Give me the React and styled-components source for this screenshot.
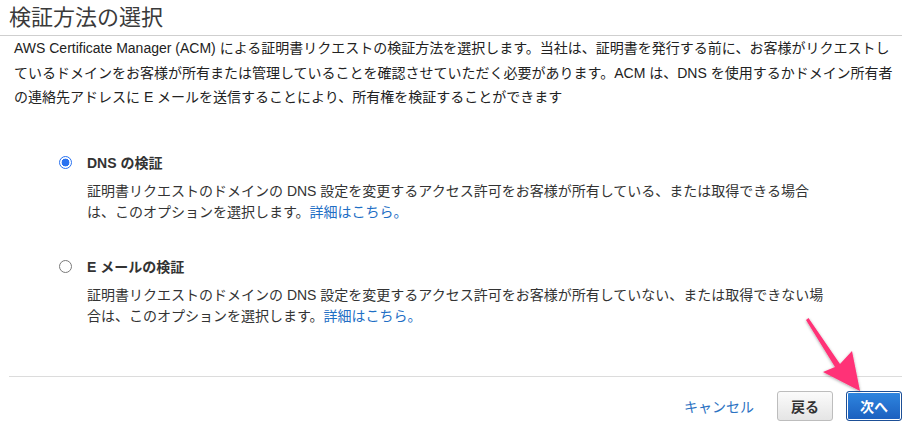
import React from "react";
import styled, { createGlobalStyle } from "styled-components";

const Global = createGlobalStyle`
  html, body { margin: 0; padding: 0; background: #fff; }
  body {
    font-family: "Liberation Sans", "Noto Sans CJK JP", sans-serif;
    color: #222;
    -webkit-font-smoothing: antialiased;
  }
`;

const Page = styled.div`
  position: relative;
  width: 914px;
  height: 432px;
  padding-right: 12px;
  box-sizing: border-box;
  overflow: hidden;
`;

const Header = styled.h1`
  margin: 0;
  height: 36px;
  box-sizing: border-box;
  padding: 5px 0 0 9px;
  font-size: 22px;
  line-height: 26px;
  font-weight: normal;
  color: #3a3a3a;
  border-bottom: 1px solid #cfcfcf;
`;

const Intro = styled.p`
  margin: 0;
  padding: 0 0 0 14px;
  font-size: 14px;
  line-height: 24.5px;
  color: #222;
  white-space: nowrap;
`;

const Options = styled.div`
  display: flex;
  flex-direction: column;
  gap: 33px;
  padding: 43px 0 0 59px;
`;

const Option = styled.label`
  display: grid;
  grid-template-columns: 13px 1fr;
  column-gap: 15px;
  row-gap: 8px;
  align-items: center;
`;

const Radio = styled.span`
  width: 13px;
  height: 13px;
  box-sizing: border-box;
  border-radius: 50%;
  border: 1px solid ${(p) => (p.$checked ? "#2a72f0" : "#7a7a7a")};
  background: ${(p) =>
    p.$checked ? "radial-gradient(circle, #2a72f0 0 3.6px, #fff 4.2px)" : "#fff"};
`;

const Label = styled.span`
  font-size: 14px;
  font-weight: bold;
  color: #333;
  line-height: 20px;
`;

const Desc = styled.p`
  grid-column: 2;
  margin: 0;
  font-size: 14px;
  line-height: 21.5px;
  color: #333;
  white-space: nowrap;
`;

const Link = styled.a`
  color: #1f6fc5;
  text-decoration: none;
`;

const Footer = styled.div`
  margin: 48px 0 0 9px;
  border-top: 1px solid #dcdcdc;
  display: flex;
  justify-content: flex-end;
  align-items: center;
  padding-top: 14px;
`;

const TextButton = styled.a`
  font-size: 14px;
  color: #2b72c2;
  margin-right: 23px;
`;

const Button = styled.button`
  height: 30px;
  box-sizing: border-box;
  padding: 0 13px;
  margin-left: ${(p) => (p.$primary ? "13px" : "0")};
  border-radius: 3px;
  font-family: "Liberation Sans", "Noto Sans CJK JP", sans-serif;
  font-size: 14px;
  font-weight: bold;
  color: ${(p) => (p.$primary ? "#fff" : "#333")};
  border: 1px solid ${(p) => (p.$primary ? "#1d4f96" : "#bdbdbd")};
  background: ${(p) =>
    p.$primary
      ? "linear-gradient(#2f86e0, #1b5fbe)"
      : "linear-gradient(#fbfbfb, #e5e5e5)"};
  box-shadow: ${(p) => (p.$primary ? "inset 0 0 0 1px #fff" : "none")};
`;

const Arrow = styled.svg`
  position: absolute;
  left: 790px;
  top: 309px;
  width: 90px;
  height: 95px;
  overflow: visible;
`;

export default function App() {
  return (
    <Page>
      <Global />
      <Header>検証方法の選択</Header>
      <Intro>
        AWS Certificate Manager (ACM) による証明書リクエストの検証方法を選択します。当社は、証明書を発行する前に、お客様がリクエストし
        <br />
        ているドメインをお客様が所有または管理していることを確認させていただく必要があります。ACM は、DNS を使用するかドメイン所有者
        <br />
        の連絡先アドレスに E メールを送信することにより、所有権を検証することができます
      </Intro>
      <Options>
        <Option>
          <Radio $checked />
          <Label>DNS の検証</Label>
          <Desc>
            証明書リクエストのドメインの DNS 設定を変更するアクセス許可をお客様が所有している、または取得できる場合
            <br />
            は、このオプションを選択します。<Link href="#">詳細はこちら。</Link>
          </Desc>
        </Option>
        <Option>
          <Radio />
          <Label>E メールの検証</Label>
          <Desc>
            証明書リクエストのドメインの DNS 設定を変更するアクセス許可をお客様が所有していない、または取得できない場
            <br />
            合は、このオプションを選択します。<Link href="#">詳細はこちら。</Link>
          </Desc>
        </Option>
      </Options>
      <Footer>
        <TextButton>キャンセル</TextButton>
        <Button>戻る</Button>
        <Button $primary>次へ</Button>
      </Footer>
      <Arrow viewBox="0 0 90 95">
        <defs>
          <filter id="sh" x="-30%" y="-30%" width="160%" height="160%">
            <feDropShadow dx="0" dy="1" stdDeviation="1.5" floodColor="#000" floodOpacity="0.35" />
          </filter>
        </defs>
        <path
          d="M16 11 L18.5 9 L50 55 L62 42 L70 82 L33 63 L45 58 Z"
          fill="#ff3377"
          filter="url(#sh)"
        />
      </Arrow>
    </Page>
  );
}
